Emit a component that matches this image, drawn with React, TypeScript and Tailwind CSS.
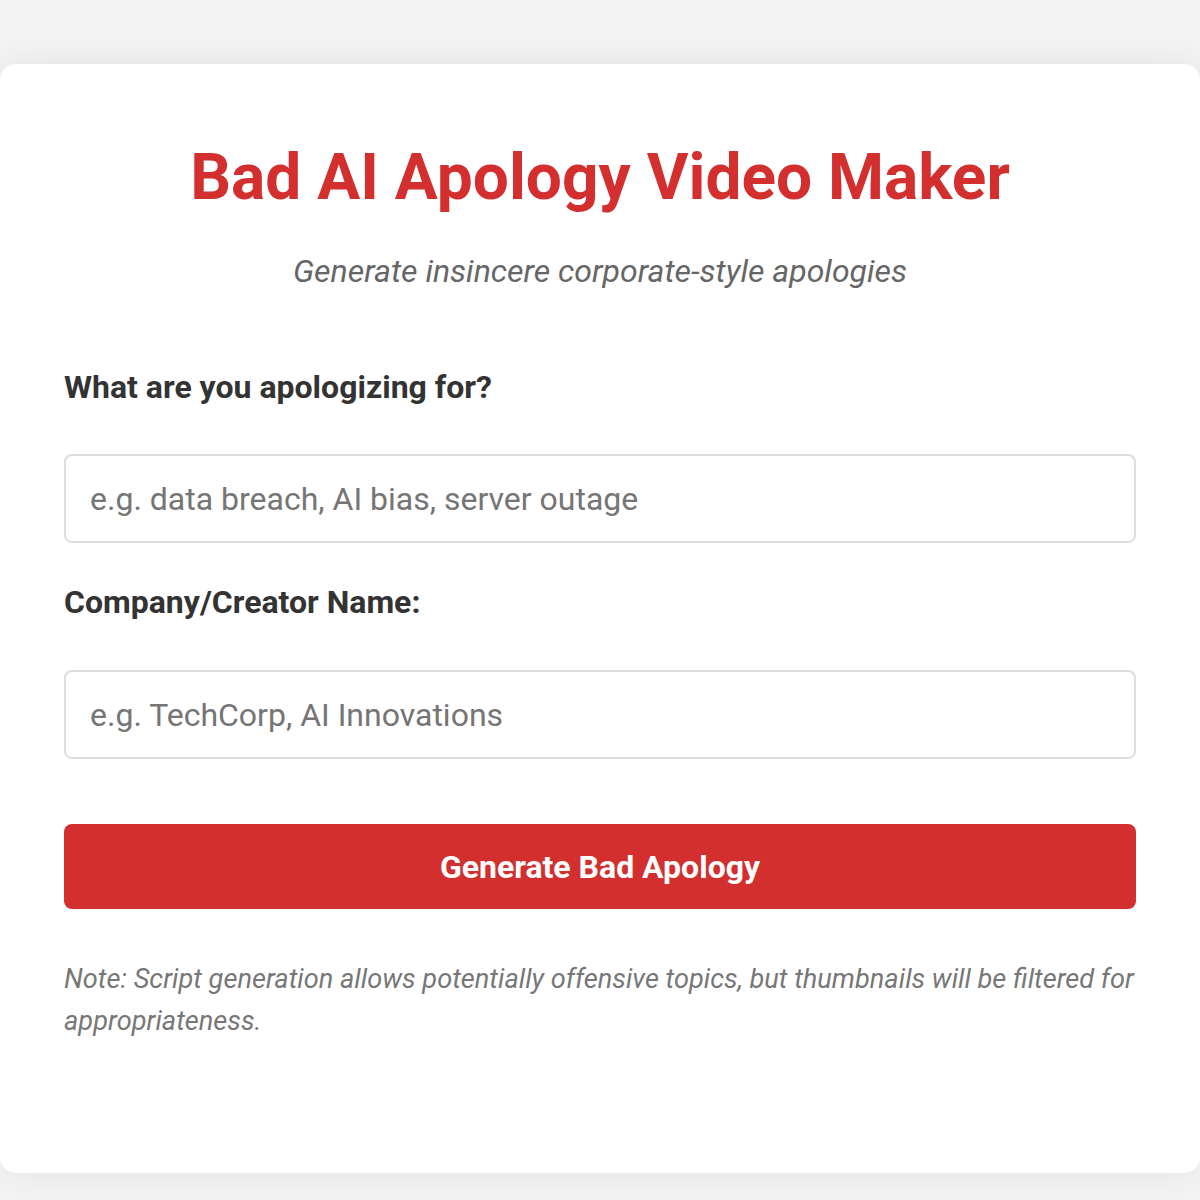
import React from "react";

function App() {
    return (
        <div className="min-h-[1200px] bg-[#f4f4f4] pt-16 pb-7" style={{ fontFamily: "Roboto, 'Liberation Sans', sans-serif" }}>
            <div className="mx-auto w-[1200px] rounded-2xl bg-white px-16 pt-[75px] pb-[131px] shadow-[0_0_40px_rgba(0,0,0,0.08)]">
                <h1 className="text-center text-[64px] font-bold leading-[77px] text-[#d32f2f]">
                    Bad AI Apology Video Maker
                </h1>
                <p className="mt-[31px] text-center text-[32px] italic leading-[48px] text-[#666]">
                    Generate insincere corporate-style apologies
                </p>

                <div className="mt-[68px]">
                    <label className="block text-[32px] font-bold leading-[48px] text-[#333]">
                        What are you apologizing for?
                    </label>
                    <input
                        type="text"
                        placeholder="e.g. data breach, AI bias, server outage"
                        className="mt-[43px] block h-[89px] w-full rounded-lg border-2 border-[#ddd] px-[24px] text-[32px] text-[#333] placeholder:text-[#757575] outline-none"
                    />
                </div>

                <div className="mt-[35px]">
                    <label className="block text-[32px] font-bold leading-[48px] text-[#333]">
                        Company/Creator Name:
                    </label>
                    <input
                        type="text"
                        placeholder="e.g. TechCorp, AI Innovations"
                        className="mt-[44px] block h-[89px] w-full rounded-lg border-2 border-[#ddd] px-[24px] text-[32px] text-[#333] placeholder:text-[#757575] outline-none"
                    />
                </div>

                <button
                    type="button"
                    className="mt-[65px] block h-[85px] w-full rounded-lg bg-[#d32f2f] text-[32px] font-bold text-white"
                >
                    Generate Bad Apology
                </button>

                <p className="mt-[49px] text-[27.2px] italic leading-[42px] text-[#777]">
                    Note: Script generation allows potentially offensive topics, but thumbnails will be filtered for appropriateness.
                </p>
            </div>
        </div>
    );
}

export default App;
